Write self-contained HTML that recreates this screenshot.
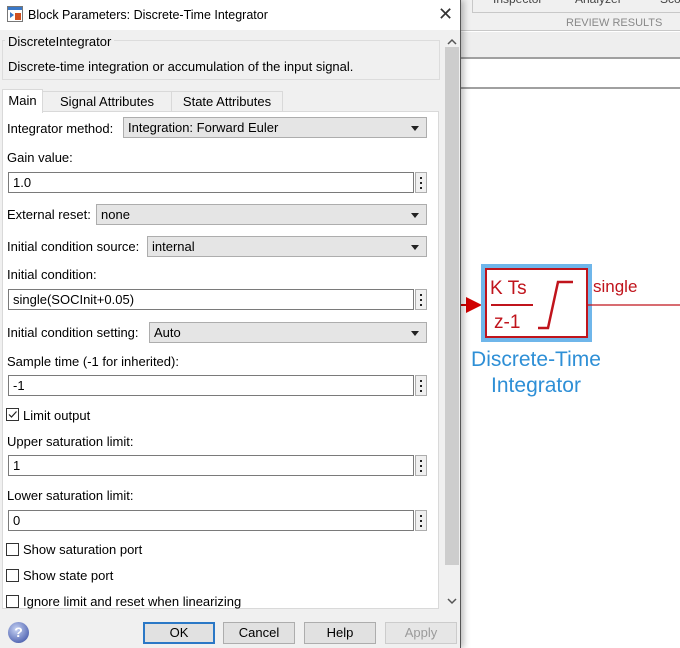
<!DOCTYPE html>
<html><head><style>
*{margin:0;padding:0;box-sizing:border-box}
body{width:680px;height:648px;position:relative;overflow:hidden;background:#fff;font-family:"Liberation Sans",sans-serif;font-size:13px;color:#000}
.a{position:absolute}
.lbl{position:absolute;white-space:nowrap}
.dd{position:absolute;background:#e5e5e5;border:1px solid #adadad;height:21px;padding:2px 4px;right:253px}
.dd:after{content:"";position:absolute;right:7px;top:8px;border-left:4px solid transparent;border-right:4px solid transparent;border-top:5px solid #222}
.in{position:absolute;left:8px;width:406px;height:21px;border:1px solid #7a7a7a;background:#fff;padding:2px 4px}
.dots{position:absolute;left:415px;width:12px;height:21px;border:1px solid #adadad;background:#f0f0f0}
.dots:after{content:"";position:absolute;left:4px;top:4px;width:2px;height:2px;background:#222;box-shadow:0 5px 0 #222,0 10px 0 #222}
.cb{position:absolute;left:6px;width:13px;height:13px;border:1px solid #333;background:#fff}
.btn{position:absolute;top:622px;height:22px;width:72px;border:1px solid #adadad;background:#e1e1e1;text-align:center;line-height:20px}
.tab{position:absolute;top:91px;height:21px;border:1px solid #d9d9d9;background:#f0f0f0;text-align:center;line-height:19px}
</style></head><body>
<!-- right side simulink -->
<div class="a" style="left:461px;top:0;width:219px;height:31px;background:#f0f0f0;border-bottom:1px solid #c8c8c8"></div>
<div class="a" style="left:472px;top:0;width:220px;height:13px;border:1px solid #c8c8c8;border-top:none"></div>
<div class="lbl" style="left:493px;top:-8px;color:#444;font-size:12px">Inspector</div>
<div class="lbl" style="left:575px;top:-8px;color:#444;font-size:12px">Analyzer</div>
<div class="lbl" style="left:660px;top:-8px;color:#444;font-size:12px">Sco</div>
<div class="lbl" style="left:566px;top:17px;color:#888;font-size:11px">REVIEW RESULTS</div>
<div class="a" style="left:461px;top:32px;width:219px;height:27px;background:#eeeeee;border-bottom:2px solid #a0a0a0"></div>
<div class="a" style="left:461px;top:87px;width:219px;height:2px;background:#a0a0a0"></div>
<!-- block -->
<div class="a" style="left:460px;top:304px;width:10px;height:2px;background:#d00000"></div>
<div class="a" style="left:466px;top:297px;border-top:8px solid transparent;border-bottom:8px solid transparent;border-left:16px solid #d00000"></div>
<div class="a" style="left:481px;top:264px;width:111px;height:78px;background:#6fb6ea"></div>
<div class="a" style="left:485px;top:268px;width:103px;height:70px;background:#fff;border:2px solid #c0141c"></div>
<div class="lbl" style="left:490px;top:278px;color:#c0141c;font-size:19px">K Ts</div>
<div class="a" style="left:491px;top:304px;width:42px;height:2px;background:#c0141c"></div>
<div class="lbl" style="left:494px;top:312px;color:#c0141c;font-size:19px">z-1</div>
<svg class="a" style="left:460px;top:250px" width="220" height="100"><polyline points="78,78 88,78 98,32 113,32" fill="none" stroke="#c0141c" stroke-width="2.5"/><line x1="128" y1="55" x2="220" y2="55" stroke="#c0141c" stroke-width="1.3"/></svg>
<div class="lbl" style="left:593px;top:277px;color:#c0141c;font-size:17px">single</div>
<div class="lbl" style="left:460px;top:348px;width:152px;text-align:center;color:#2e8fd6;font-size:21px">Discrete-Time</div>
<div class="lbl" style="left:460px;top:374px;width:152px;text-align:center;color:#2e8fd6;font-size:21px">Integrator</div>
<!-- dialog -->
<div class="a" style="left:0;top:0;width:461px;height:648px;background:#f0f0f0;border-right:1px solid #555;box-shadow:3px 0 6px rgba(0,0,0,.25)"></div>
<div class="a" style="left:0;top:0;width:460px;height:30px;background:#fff"></div>
<svg class="a" style="left:7px;top:6px" width="16" height="16"><rect x="0.5" y="0.5" width="15" height="15" fill="#fff" stroke="#777"/><rect x="1" y="1" width="14" height="3" fill="#3a78c8"/><path d="M3 6 l4 3 -4 3z" fill="#3a78c8"/><rect x="8" y="7" width="6" height="7" fill="#d05020"/></svg>
<div class="lbl" style="left:28px;top:8px;font-size:12.5px">Block Parameters: Discrete-Time Integrator</div>
<div class="lbl" style="left:438px;top:4px;font-size:18px;color:#333">✕</div>
<div class="a" style="left:2px;top:40px;width:438px;height:40px;border:1px solid #dcdcdc"></div>
<div class="lbl" style="left:5px;top:34px;background:#f0f0f0;padding:0 3px">DiscreteIntegrator</div>
<div class="lbl" style="left:8px;top:59px">Discrete-time integration or accumulation of the input signal.</div>
<!-- tabs -->
<div class="a" style="left:2px;top:111px;width:437px;height:498px;background:#fff;border:1px solid #d9d9d9"></div>
<div class="tab" style="left:42px;width:130px">Signal Attributes</div>
<div class="tab" style="left:171px;width:112px">State Attributes</div>
<div class="a" style="left:2px;top:89px;width:41px;height:24px;background:#fff;border:1px solid #d9d9d9;border-bottom:none;text-align:center;line-height:22px">Main</div>
<!-- fields -->
<div class="lbl" style="left:7px;top:121px">Integrator method:</div>
<div class="dd" style="left:123px;top:117px">Integration: Forward Euler</div>
<div class="lbl" style="left:7px;top:150px">Gain value:</div>
<div class="in" style="top:172px">1.0</div><div class="dots" style="top:172px"></div>
<div class="lbl" style="left:7px;top:207px">External reset:</div>
<div class="dd" style="left:96px;top:204px">none</div>
<div class="lbl" style="left:7px;top:239px">Initial condition source:</div>
<div class="dd" style="left:147px;top:236px">internal</div>
<div class="lbl" style="left:7px;top:267px">Initial condition:</div>
<div class="in" style="top:289px">single(SOCInit+0.05)</div><div class="dots" style="top:289px"></div>
<div class="lbl" style="left:7px;top:325px">Initial condition setting:</div>
<div class="dd" style="left:149px;top:322px">Auto</div>
<div class="lbl" style="left:7px;top:354px">Sample time (-1 for inherited):</div>
<div class="in" style="top:375px">-1</div><div class="dots" style="top:375px"></div>
<div class="cb" style="top:408px"><svg width="11" height="11" style="position:absolute;left:0;top:0"><path d="M2 5.5 L4.5 8 L9.5 2.5" fill="none" stroke="#222" stroke-width="1.2"/></svg></div>
<div class="lbl" style="left:23px;top:408px">Limit output</div>
<div class="lbl" style="left:7px;top:434px">Upper saturation limit:</div>
<div class="in" style="top:455px">1</div><div class="dots" style="top:455px"></div>
<div class="lbl" style="left:7px;top:488px">Lower saturation limit:</div>
<div class="in" style="top:510px">0</div><div class="dots" style="top:510px"></div>
<div class="cb" style="top:543px"></div><div class="lbl" style="left:23px;top:542px">Show saturation port</div>
<div class="cb" style="top:569px"></div><div class="lbl" style="left:23px;top:568px">Show state port</div>
<div class="cb" style="top:595px"></div><div class="lbl" style="left:23px;top:594px">Ignore limit and reset when linearizing</div>
<!-- scrollbar -->
<div class="a" style="left:444px;top:32px;width:16px;height:577px;background:#f0f0f0"></div>
<div class="a" style="left:445px;top:47px;width:14px;height:518px;background:#cdcdcd"></div>
<svg class="a" style="left:447px;top:38px" width="10" height="8"><path d="M1 6 L5 2 L9 6" fill="none" stroke="#555" stroke-width="1.5"/></svg>
<svg class="a" style="left:447px;top:597px" width="10" height="8"><path d="M1 2 L5 6 L9 2" fill="none" stroke="#555" stroke-width="1.5"/></svg>
<!-- bottom -->
<div class="a" style="left:8px;top:622px;width:21px;height:21px;border-radius:50%;background:radial-gradient(circle at 40% 35%,#c8d4f4,#5c6fb8 70%,#3a4a90);color:#fff;text-align:center;font-weight:bold;font-size:14px;line-height:21px">?</div>
<div class="btn" style="left:143px;border:2px solid #2b78c6;line-height:18px">OK</div>
<div class="btn" style="left:223px">Cancel</div>
<div class="btn" style="left:304px">Help</div>
<div class="btn" style="left:385px;color:#9a9a9a;background:#e6e6e6;border-color:#ccc">Apply</div>
</body></html>
